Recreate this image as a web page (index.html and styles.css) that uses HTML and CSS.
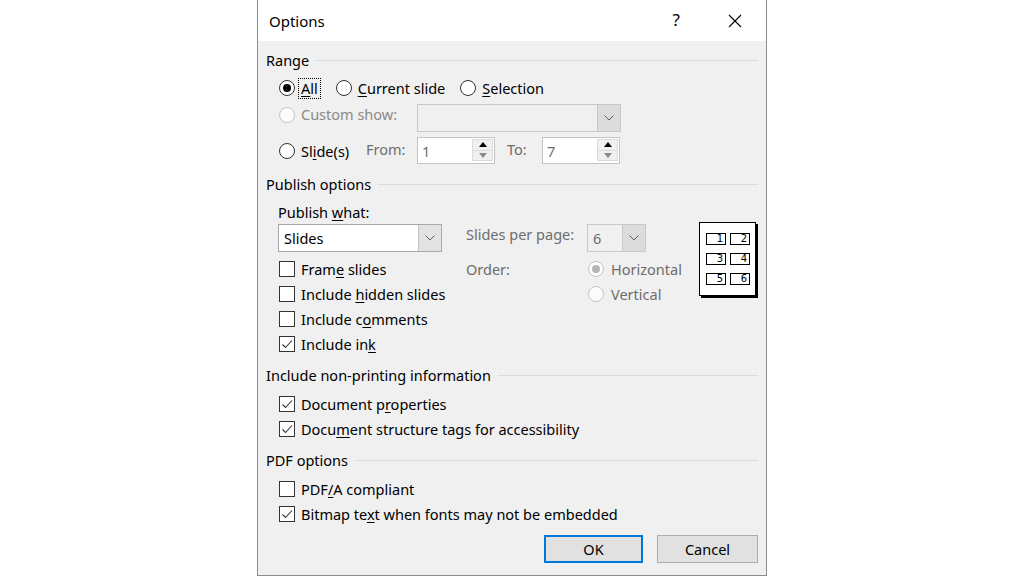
FILE: index.html
```html
<!DOCTYPE html>
<html lang="en">
<head>
    <meta charset="UTF-8">
    <title>Options</title>
    <link rel="stylesheet" href="styles.css">
</head>
<body>
    <div class="dialog">
        <div class="titlebar">
            <span class="title">Options</span>
            <span class="help">?</span>
            <span class="close">
                <svg width="14" height="14" viewBox="0 0 14 14"><path d="M1 1L13 13M13 1L1 13" stroke="#000" stroke-width="1.1" fill="none"/></svg>
            </span>
        </div>
        <div class="content">
            <!-- Range -->
            <div class="group-head"><span>Range</span></div>
            <div class="row range-1 indent">
                <label class="opt"><span class="radio checked"></span><span class="focus"><u>A</u>ll</span></label>
                <label class="opt"><span class="radio"></span><span class="txt"><u>C</u>urrent slide</span></label>
                <label class="opt"><span class="radio"></span><span class="txt"><u>S</u>election</span></label>
            </div>
            <div class="row range-2 indent">
                <span class="radio disabled"></span>
                <span class="txt lbl-custom dim-light">Custom show:</span>
                <div class="combo disabled combo-show">
                    <span class="combo-text"></span>
                    <span class="combo-btn"><svg width="10" height="6" viewBox="0 0 10 6"><path d="M0.5 0.5L5 5L9.5 0.5" fill="none" stroke="#606060"/></svg></span>
                </div>
            </div>
            <div class="row range-3 indent">
                <span class="radio"></span>
                <span class="txt lbl-slides">Sl<u>i</u>de(s)</span>
                <span class="lbl-from dim">From:</span>
                <div class="spin">
                    <span class="spin-text">1</span>
                    <span class="spin-btns">
                        <span class="spin-up"><svg width="8" height="5" viewBox="0 0 8 5"><path d="M0 5L4 0L8 5Z" fill="#000"/></svg></span>
                        <span class="spin-down"><svg width="8" height="5" viewBox="0 0 8 5"><path d="M0 0L4 5L8 0Z" fill="#8a8a8a"/></svg></span>
                    </span>
                </div>
                <span class="lbl-to dim">To:</span>
                <div class="spin">
                    <span class="spin-text">7</span>
                    <span class="spin-btns">
                        <span class="spin-up"><svg width="8" height="5" viewBox="0 0 8 5"><path d="M0 5L4 0L8 5Z" fill="#000"/></svg></span>
                        <span class="spin-down"><svg width="8" height="5" viewBox="0 0 8 5"><path d="M0 0L4 5L8 0Z" fill="#8a8a8a"/></svg></span>
                    </span>
                </div>
            </div>

            <!-- Publish options -->
            <div class="group-head publish-head"><span>Publish options</span></div>
            <div class="publish indent">
                <div class="pub-left">
                    <div class="pub-label">Publish <u>w</u>hat:</div>
                    <div class="combo combo-what">
                        <span class="combo-text">Slides</span>
                        <span class="combo-btn"><svg width="10" height="6" viewBox="0 0 10 6"><path d="M0.5 0.5L5 5L9.5 0.5" fill="none" stroke="#606060"/></svg></span>
                    </div>
                    <div class="checks">
                        <div class="check-row"><span class="box"></span><span class="txt">Fram<u>e</u> slides</span></div>
                        <div class="check-row"><span class="box"></span><span class="txt">Include <u>h</u>idden slides</span></div>
                        <div class="check-row"><span class="box"></span><span class="txt">Include c<u>o</u>mments</span></div>
                        <div class="check-row"><span class="box on"><svg width="14" height="14" viewBox="0 0 14 14"><path d="M2.5 7.5L5.5 10.5L12 3.5" fill="none" stroke="#333" stroke-width="1.1"/></svg></span><span class="txt">Include in<u>k</u></span></div>
                    </div>
                </div>
                <div class="pub-mid">
                    <div class="mid-row mid-per">
                        <span class="mid-lbl dim">Slides per page:</span>
                        <div class="combo disabled combo-per">
                            <span class="combo-text dim">6</span>
                            <span class="combo-btn"><svg width="10" height="6" viewBox="0 0 10 6"><path d="M0.5 0.5L5 5L9.5 0.5" fill="none" stroke="#606060"/></svg></span>
                        </div>
                    </div>
                    <div class="mid-row mid-order">
                        <span class="mid-lbl dim">Order:</span>
                        <span class="radio disabled checked"></span>
                        <span class="txt dim">Horizontal</span>
                    </div>
                    <div class="mid-row mid-order">
                        <span class="mid-lbl"></span>
                        <span class="radio disabled"></span>
                        <span class="txt dim">Vertical</span>
                    </div>
                </div>
                <div class="thumb">
                    <span class="cell">1</span><span class="cell">2</span>
                    <span class="cell">3</span><span class="cell">4</span>
                    <span class="cell">5</span><span class="cell">6</span>
                </div>
            </div>

            <!-- Include non-printing information -->
            <div class="group-head sect-head"><span>Include non-printing information</span></div>
            <div class="checks indent sect-checks">
                <div class="check-row"><span class="box on"><svg width="14" height="14" viewBox="0 0 14 14"><path d="M2.5 7.5L5.5 10.5L12 3.5" fill="none" stroke="#333" stroke-width="1.1"/></svg></span><span class="txt">Document p<u>r</u>operties</span></div>
                <div class="check-row"><span class="box on"><svg width="14" height="14" viewBox="0 0 14 14"><path d="M2.5 7.5L5.5 10.5L12 3.5" fill="none" stroke="#333" stroke-width="1.1"/></svg></span><span class="txt">Docu<u>m</u>ent structure tags for accessibility</span></div>
            </div>

            <!-- PDF options -->
            <div class="group-head sect-head"><span>PDF options</span></div>
            <div class="checks indent sect-checks">
                <div class="check-row"><span class="box"></span><span class="txt">PDF<u>/</u>A compliant</span></div>
                <div class="check-row"><span class="box on"><svg width="14" height="14" viewBox="0 0 14 14"><path d="M2.5 7.5L5.5 10.5L12 3.5" fill="none" stroke="#333" stroke-width="1.1"/></svg></span><span class="txt">Bitmap te<u>x</u>t when fonts may not be embedded</span></div>
            </div>

            <div class="buttons">
                <button class="btn btn-ok">OK</button>
                <button class="btn btn-cancel">Cancel</button>
            </div>
        </div>
    </div>
</body>
</html>
```

FILE: styles.css
```css
body {
    margin: 0;
    padding: 0;
    background-color: #fff;
    font-family: "Noto Sans", "Open Sans", sans-serif;
    font-size: 14.5px;
    color: #000;
    display: flex;
    justify-content: center;
}
.dialog {
    width: 510px;
    height: 576px;
    box-sizing: border-box;
    border: 1px solid #8c8c8c;
    border-top: none;
    background-color: #f0f0f0;
}
.titlebar {
    height: 41px;
    background-color: #fff;
    display: flex;
    align-items: center;
    padding: 0 24px 0 11px;
}
.title {
    flex: 1;
    font-size: 15px;
    margin-top: 1px;
}
.help {
    font-size: 17px;
    margin-right: 48px;
    margin-top: -2px;
}
.close {
    display: flex;
}
.content {
    padding: 0 8px;
}
u {
    text-decoration: underline;
    text-underline-offset: 2px;
}
.dim {
    color: #6d6d6d;
}
.dim-light {
    color: #8a8a8a;
}

/* group headers */
.group-head {
    display: flex;
    align-items: center;
    height: 20px;
    gap: 7px;
    margin-top: 9px;
}
.group-head::after {
    content: "";
    flex: 1;
    height: 1px;
    background-color: #dcdcdc;
}
.publish-head {
    margin-top: 10px;
}
.indent {
    padding-left: 12px;
}

/* rows */
.row {
    display: flex;
}
.range-1 {
    margin-top: 6px;
    height: 24px;
    align-items: center;
}
.opt {
    display: flex;
    align-items: center;
    margin-right: 14px;
}
.opt .txt {
    margin-left: 6px;
}
.focus {
    margin-left: 3px;
    padding: 0 2px;
    line-height: 19px;
    border: 1px dotted #000;
}
.range-2 {
    margin-top: 4px;
    height: 28px;
    align-items: flex-start;
}
.range-2 .radio {
    margin-top: 3px;
}
.lbl-custom {
    width: 116px;
    margin-left: 6px;
    line-height: 21px;
}
.range-3 {
    margin-top: 5px;
    height: 27px;
    align-items: center;
}
.lbl-slides {
    width: 65px;
    margin-left: 6px;
}
.lbl-from {
    width: 51px;
    margin-top: -3px;
}
.lbl-to {
    width: 35px;
    margin-left: 12px;
    margin-top: -3px;
}

/* radio + checkbox */
.radio {
    width: 16px;
    height: 16px;
    box-sizing: border-box;
    margin-left: 1px;
    border: 1px solid #333;
    border-radius: 50%;
    background-color: #fff;
    display: flex;
    align-items: center;
    justify-content: center;
    flex-shrink: 0;
}
.radio.checked::after {
    content: "";
    width: 8px;
    height: 8px;
    border-radius: 50%;
    background-color: #000;
}
.radio.disabled {
    border-color: #c4c4c4;
    background-color: #fcfcfc;
}
.radio.disabled.checked::after {
    background-color: #b5b5b5;
}
.checks {
    margin-top: 4px;
}
.check-row {
    display: flex;
    align-items: center;
    height: 25px;
}
.box {
    width: 16px;
    height: 16px;
    box-sizing: border-box;
    margin-left: 1px;
    border: 1px solid #333;
    background-color: #fff;
    display: flex;
    align-items: center;
    justify-content: center;
    flex-shrink: 0;
}
.check-row .txt {
    margin-left: 6px;
}

/* combo boxes */
.combo {
    display: flex;
    height: 28px;
    box-sizing: border-box;
    border: 1px solid #a8a8a8;
    background-color: #fff;
}
.combo-text {
    flex: 1;
    padding-left: 5px;
    line-height: 26px;
}
.combo-btn {
    width: 22px;
    background-color: #e3e3e3;
    border-left: 1px solid #c4c4c4;
    display: flex;
    align-items: center;
    justify-content: center;
}
.combo.disabled {
    border-color: #c8c8c8;
    background-color: #f0f0f0;
}
.combo.disabled .combo-btn {
    background-color: #dcdcdc;
    border-left-color: #c8c8c8;
}
.combo-show {
    width: 204px;
}
.combo-what {
    width: 164px;
    margin-top: 2px;
}
.combo-per {
    width: 59px;
}

/* spinners */
.spin {
    display: flex;
    width: 78px;
    height: 27px;
    box-sizing: border-box;
    border: 1px solid #c4c4c4;
    background-color: #fff;
}
.spin-text {
    flex: 1;
    padding-left: 4px;
    line-height: 26px;
    color: #6d6d6d;
}
.spin-btns {
    width: 21px;
    display: flex;
    flex-direction: column;
    padding: 1px 1px 2px 0;
}
.spin-up,
.spin-down {
    flex: 1;
    display: flex;
    align-items: center;
    justify-content: center;
    background-color: #f0f0f0;
    border: 1px solid #dcdcdc;
}
.spin-down {
    border-top: none;
}

/* publish block */
.publish {
    display: flex;
    margin-top: 8px;
}
.pub-left {
    width: 188px;
}
.pub-label {
    height: 20px;
    line-height: 20px;
}
.pub-mid {
    margin-top: 22px;
}
.mid-row {
    display: flex;
}
.mid-per {
    height: 28px;
    align-items: flex-start;
}
.mid-per .mid-lbl {
    line-height: 20px;
}
.mid-order {
    height: 25px;
    align-items: center;
}
.mid-per + .mid-order {
    margin-top: 4px;
}
.mid-lbl {
    width: 121px;
}
.mid-order .txt {
    margin-left: 7px;
}
.thumb {
    margin-left: auto;
    margin-right: 2px;
    margin-top: 20px;
    width: 57px;
    height: 74px;
    box-sizing: border-box;
    border: 1px solid #000;
    box-shadow: 2px 2px 0 #000;
    background-color: #fff;
    padding: 10px 0 0 6px;
    display: grid;
    grid-template-columns: 20px 20px;
    grid-auto-rows: 12px;
    column-gap: 4px;
    row-gap: 8px;
}
.cell {
    border: 1px solid #000;
    font-family: "DejaVu Sans", sans-serif;
    font-size: 10px;
    line-height: 10px;
    text-align: right;
    padding-right: 2px;
}

/* other sections */
.sect-checks {
    margin-top: 6px;
}
.buttons {
    display: flex;
    justify-content: flex-end;
    gap: 14px;
    margin-top: 9px;
}
.btn {
    height: 28px;
    box-sizing: border-box;
    background-color: #e1e1e1;
    border: 1px solid #adadad;
    font-family: "Noto Sans", "Open Sans", sans-serif;
    font-size: 14.5px;
    color: #000;
    padding: 0;
}
.btn-ok {
    width: 99px;
    border: 2px solid #0078d7;
}
.btn-cancel {
    width: 101px;
}
```
